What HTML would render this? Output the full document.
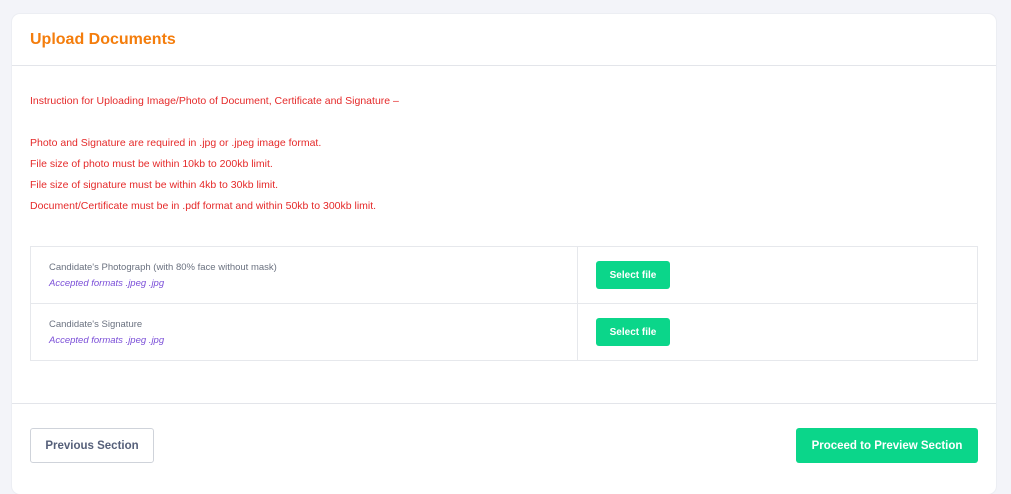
<!DOCTYPE html>
<html><head><style>
*{box-sizing:border-box;margin:0;padding:0}
body{width:1011px;height:488px;background:#f3f4f9;font-family:"Liberation Sans",sans-serif;position:relative;overflow:hidden}
.card{position:absolute;left:12px;top:14px;width:984px;height:480px;background:#fff;border-radius:8px;box-shadow:0 0 0 1px #eceef3}
.title{position:absolute;left:18px;top:17px;font-size:16px;font-weight:bold;color:#f47d0c}
.hl{position:absolute;left:0;right:0;height:1px;background:#e3e5ea}
.ins{position:absolute;left:18px;font-size:10.5px;color:#e52a2a}
.tbl{position:absolute;left:18px;top:232px;width:948px;height:115px;border:1px solid #e6e8ec}
.row{position:absolute;left:0;right:0;height:57px}
.lab{position:absolute;left:18px;font-size:9.5px;color:#6b7280}
.acc{position:absolute;left:18px;font-size:9.5px;color:#7b4fd8;font-style:italic}
.vs{position:absolute;left:546px;top:0;bottom:0;width:1px;background:#e6e8ec}
.sel{position:absolute;left:565px;width:74px;height:28px;background:#0bd68a;border-radius:3px;color:#fff;font-size:10px;font-weight:bold;text-align:center;line-height:29px}
.btn{position:absolute;top:414px;height:35px;border-radius:3px;font-size:12px;font-weight:bold;text-align:center;line-height:34px}
</style></head><body>
<div class="card">
<div class="title">Upload Documents</div>
<div class="hl" style="top:51px"></div>
<div class="ins" style="top:81px">Instruction for Uploading Image/Photo of Document, Certificate and Signature –</div>
<div class="ins" style="top:123px">Photo and Signature are required in .jpg or .jpeg image format.</div>
<div class="ins" style="top:144px">File size of photo must be within 10kb to 200kb limit.</div>
<div class="ins" style="top:165px">File size of signature must be within 4kb to 30kb limit.</div>
<div class="ins" style="top:186px">Document/Certificate must be in .pdf format and within 50kb to 300kb limit.</div>
<div class="tbl">
<div class="vs"></div>
<div class="row" style="top:0">
<div class="lab" style="top:15px">Candidate's Photograph (with 80% face without mask)</div>
<div class="acc" style="top:31px">Accepted formats .jpeg .jpg</div>
<div class="sel" style="top:14px">Select file</div>
</div>
<div style="position:absolute;left:0;right:0;top:56px;height:1px;background:#e6e8ec"></div>
<div class="row" style="top:57px">
<div class="lab" style="top:15px">Candidate's Signature</div>
<div class="acc" style="top:31px">Accepted formats .jpeg .jpg</div>
<div class="sel" style="top:14px">Select file</div>
</div>
</div>
<div class="hl" style="top:389px"></div>
<div class="btn" style="left:18px;width:124px;border:1px solid #cfd3da;color:#56607a;font-size:11.5px">Previous Section</div>
<div class="btn" style="left:784px;width:182px;background:#0bd68a;color:#fff;line-height:36px;font-size:11.5px">Proceed to Preview Section</div>
</div>
</body></html>
